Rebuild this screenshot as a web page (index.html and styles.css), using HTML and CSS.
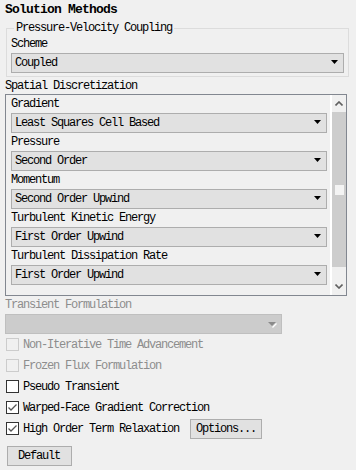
FILE: index.html
```html
<!DOCTYPE html>
<html>
	<head>
		<meta charset="utf-8">
		<title>Solution Methods</title>
		<link rel="stylesheet" href="styles.css">
	</head>
	<body>
		<div class="panel">
			<div class="title">Solution Methods</div>

			<!-- 压力速度耦合 -->
			<fieldset class="group">
				<legend>Pressure-Velocity Coupling</legend>
				<div class="label">Scheme</div>
				<div class="select">
					<span>Coupled</span>
					<svg class="arrow" width="7" height="4" viewBox="0 0 7 4"><polygon points="0,0 7,0 3.5,4" /></svg>
				</div>
			</fieldset>

			<!-- 空间离散 -->
			<div class="section-label">Spatial Discretization</div>
			<div class="scroll-box">
				<div class="scroll-content">
					<div class="label">Gradient</div>
					<div class="select">
						<span>Least Squares Cell Based</span>
						<svg class="arrow" width="7" height="4" viewBox="0 0 7 4"><polygon points="0,0 7,0 3.5,4" /></svg>
					</div>
					<div class="label">Pressure</div>
					<div class="select">
						<span>Second Order</span>
						<svg class="arrow" width="7" height="4" viewBox="0 0 7 4"><polygon points="0,0 7,0 3.5,4" /></svg>
					</div>
					<div class="label">Momentum</div>
					<div class="select">
						<span>Second Order Upwind</span>
						<svg class="arrow" width="7" height="4" viewBox="0 0 7 4"><polygon points="0,0 7,0 3.5,4" /></svg>
					</div>
					<div class="label">Turbulent Kinetic Energy</div>
					<div class="select">
						<span>First Order Upwind</span>
						<svg class="arrow" width="7" height="4" viewBox="0 0 7 4"><polygon points="0,0 7,0 3.5,4" /></svg>
					</div>
					<div class="label">Turbulent Dissipation Rate</div>
					<div class="select">
						<span>First Order Upwind</span>
						<svg class="arrow" width="7" height="4" viewBox="0 0 7 4"><polygon points="0,0 7,0 3.5,4" /></svg>
					</div>
				</div>
				<div class="scrollbar">
					<div class="sb-btn">
						<svg width="8" height="5" viewBox="0 0 8 5"><polyline points="0.5,4.5 4,1 7.5,4.5" /></svg>
					</div>
					<div class="sb-thumb"><div class="sb-mark"></div></div>
					<div class="sb-track"></div>
					<div class="sb-btn">
						<svg width="8" height="5" viewBox="0 0 8 5"><polyline points="0.5,0.5 4,4 7.5,0.5" /></svg>
					</div>
				</div>
			</div>

			<!-- 瞬态 -->
			<div class="label disabled">Transient Formulation</div>
			<div class="select select-off">
				<span></span>
				<svg class="arrow" width="9" height="6" viewBox="0 0 9 6"><polygon points="0,0 8,0 4,4" fill="#8a8a8a" /><polyline points="4.5,5.5 8.5,1.5" stroke="#fff" stroke-width="1.2" fill="none" /></svg>
			</div>

			<div class="check-row disabled"><span class="box"></span>Non-Iterative Time Advancement</div>
			<div class="check-row disabled"><span class="box"></span>Frozen Flux Formulation</div>
			<div class="check-row"><span class="box"></span>Pseudo Transient</div>
			<div class="check-row">
				<span class="box"><svg width="11" height="11" viewBox="0 0 11 11"><polyline points="1.5,5.5 4,8 9.5,2.5" /></svg></span>Warped-Face Gradient Correction
			</div>
			<div class="check-row">
				<span class="box"><svg width="11" height="11" viewBox="0 0 11 11"><polyline points="1.5,5.5 4,8 9.5,2.5" /></svg></span>High Order Term Relaxation
				<button class="btn btn-options">Options...</button>
			</div>

			<button class="btn btn-default">Default</button>
		</div>
	</body>
</html>
```

FILE: styles.css
```css
* {
	box-sizing: border-box;
}

body {
	margin: 0;
	width: 356px;
	height: 470px;
	overflow: hidden;
	background: #f0f0f0;
	font-family: "Liberation Mono", monospace;
	font-size: 12px;
	letter-spacing: -1.2px;
	color: #000;
}

.panel {
	display: flex;
	flex-direction: column;
	align-items: flex-start;
}

.title {
	height: 21px;
	padding: 3px 0 0 5px;
	font-size: 13px;
	font-weight: bold;
	letter-spacing: -0.8px;
	line-height: 14px;
}

/* 分组框 */
.group {
	align-self: stretch;
	margin: 0 7px 0 6px;
	padding: 0 4px 3px;
	border: 1px solid #dcdcdc;
	min-width: 0;
}

.group legend {
	margin-left: 3px;
	padding: 0 2px;
	line-height: 14px;
}

.label {
	height: 18px;
	line-height: 18px;
}

.label.disabled {
	padding-left: 5px;
	color: #8d8d8d;
}

.section-label {
	height: 17px;
	padding: 1px 0 0 5px;
	line-height: 16px;
}

/* 下拉框 */
.select {
	align-self: stretch;
	display: flex;
	justify-content: space-between;
	height: 20px;
	padding: 0 5px 0 3px;
	border: 1px solid #adadad;
	background: #e1e1e1;
	line-height: 18px;
	white-space: nowrap;
}

.select .arrow {
	margin-top: 6px;
	fill: #000;
}

.select-off {
	align-self: flex-start;
	width: 277px;
	margin-left: 5px;
	padding-right: 4px;
	border-color: #bfbfbf;
	background: #cccccc;
}

.select-off .arrow {
	margin-top: 7px;
}

/* 滚动区 */
.scroll-box {
	align-self: stretch;
	display: flex;
	height: 202px;
	margin: 0 9px 0 5px;
	border: 1px solid #828790;
}

.scroll-content {
	flex: 1;
	display: flex;
	flex-direction: column;
	padding: 0 3px 0 5px;
}

.scrollbar {
	width: 16px;
	display: flex;
	flex-direction: column;
	border-left: 2px solid #fff;
}

.sb-btn {
	height: 17px;
	display: flex;
	align-items: center;
	justify-content: center;
}

.sb-btn svg polyline {
	fill: none;
	stroke: #606060;
	stroke-width: 1.6;
}

.sb-thumb {
	height: 155px;
	padding: 73px 0 0 3px;
	background: #cdcdcd;
}

.sb-mark {
	width: 9px;
	height: 10px;
	background: #f4f4f4;
}

.sb-track {
	flex: 1;
}

/* 复选框 */
.check-row {
	display: flex;
	align-items: center;
	height: 21px;
	margin-left: 6px;
	white-space: nowrap;
}

.check-row:first-of-type {
	margin-top: 0;
}

.check-row .box {
	width: 13px;
	height: 13px;
	margin-right: 4px;
	border: 1px solid #333;
	background: #fff;
	display: flex;
	align-items: center;
	justify-content: center;
}

.check-row .box polyline {
	fill: none;
	stroke: #555;
	stroke-width: 1.3;
}

.check-row.disabled {
	color: #8d8d8d;
}

.check-row.disabled .box {
	border-color: #cccccc;
	background: #f0f0f0;
}

/* 按钮 */
.btn {
	height: 20px;
	padding: 0 5px;
	border: 1px solid #adadad;
	background: #e1e1e1;
	font-family: inherit;
	font-size: inherit;
	letter-spacing: inherit;
	color: #000;
	line-height: 18px;
}

.btn-options {
	margin-left: 11px;
}

.btn-default {
	width: 65px;
	margin: 7px 0 0 7px;
	text-align: left;
	padding-left: 10px;
}
```
